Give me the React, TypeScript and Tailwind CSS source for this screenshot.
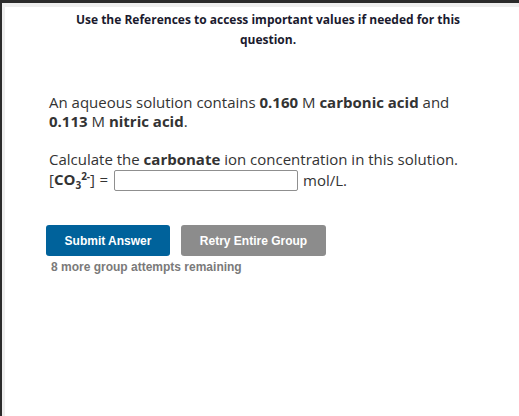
export default function App() {
  return (
    <div className="h-screen w-full overflow-hidden bg-[#2b2b2b] pt-[3px] pl-[2px]">
      <div className="h-full bg-[#eeeeee] pt-[4px] pl-[3px]">
        <div className="h-full bg-white pt-[3px] font-['Open_Sans',sans-serif]">
          <div className="ml-[63px] w-[400px] text-center text-[12px] font-bold leading-[20px] text-[#1a1a2e]">
            Use the References to access important values if needed for this question.
          </div>

          <div className="ml-[44px] mt-[43px] text-[15px] leading-[19px] text-[#333333]">
            <p>
              An aqueous solution contains <b>0.160</b> M <b>carbonic acid</b> and
              <br />
              <b>0.113</b> M <b>nitric acid</b>.
            </p>

            <p className="mt-[19px]">Calculate the <b>carbonate</b> ion concentration in this solution.</p>
            <div className="flex items-center mt-[1px]">
              <div className="flex w-[65px] shrink-0 justify-between pr-[6px] whitespace-nowrap">
                <span>
                  [<b>CO</b>
                  <b className="relative top-[4px] text-[10px]">3</b>
                  <b className="relative top-[-5px] text-[10px]">2-</b>]
                </span>
                <span>=</span>
              </div>
              <input
                type="text"
                className="h-[21px] w-[184px] rounded-[2px] border border-[#8f8f8f] bg-white"
              />
              <span className="ml-[5px]">mol/L.</span>
            </div>
          </div>

          <div className="ml-[41px] mt-[34px] flex gap-[11px] font-['Liberation_Sans',Arial,sans-serif] text-[12px] font-bold text-white">
            <button className="h-[31px] w-[124px] rounded-[3px] bg-[#00629b]">Submit Answer</button>
            <button className="h-[31px] w-[145px] rounded-[3px] bg-[#8c8c8c]">Retry Entire Group</button>
          </div>
          <div className="ml-[46px] mt-[3px] font-['Liberation_Sans',Arial,sans-serif] text-[12px] font-bold leading-[16px] text-[#7a7a7a]">
            8 more group attempts remaining
          </div>
        </div>
      </div>
    </div>
  );
}
